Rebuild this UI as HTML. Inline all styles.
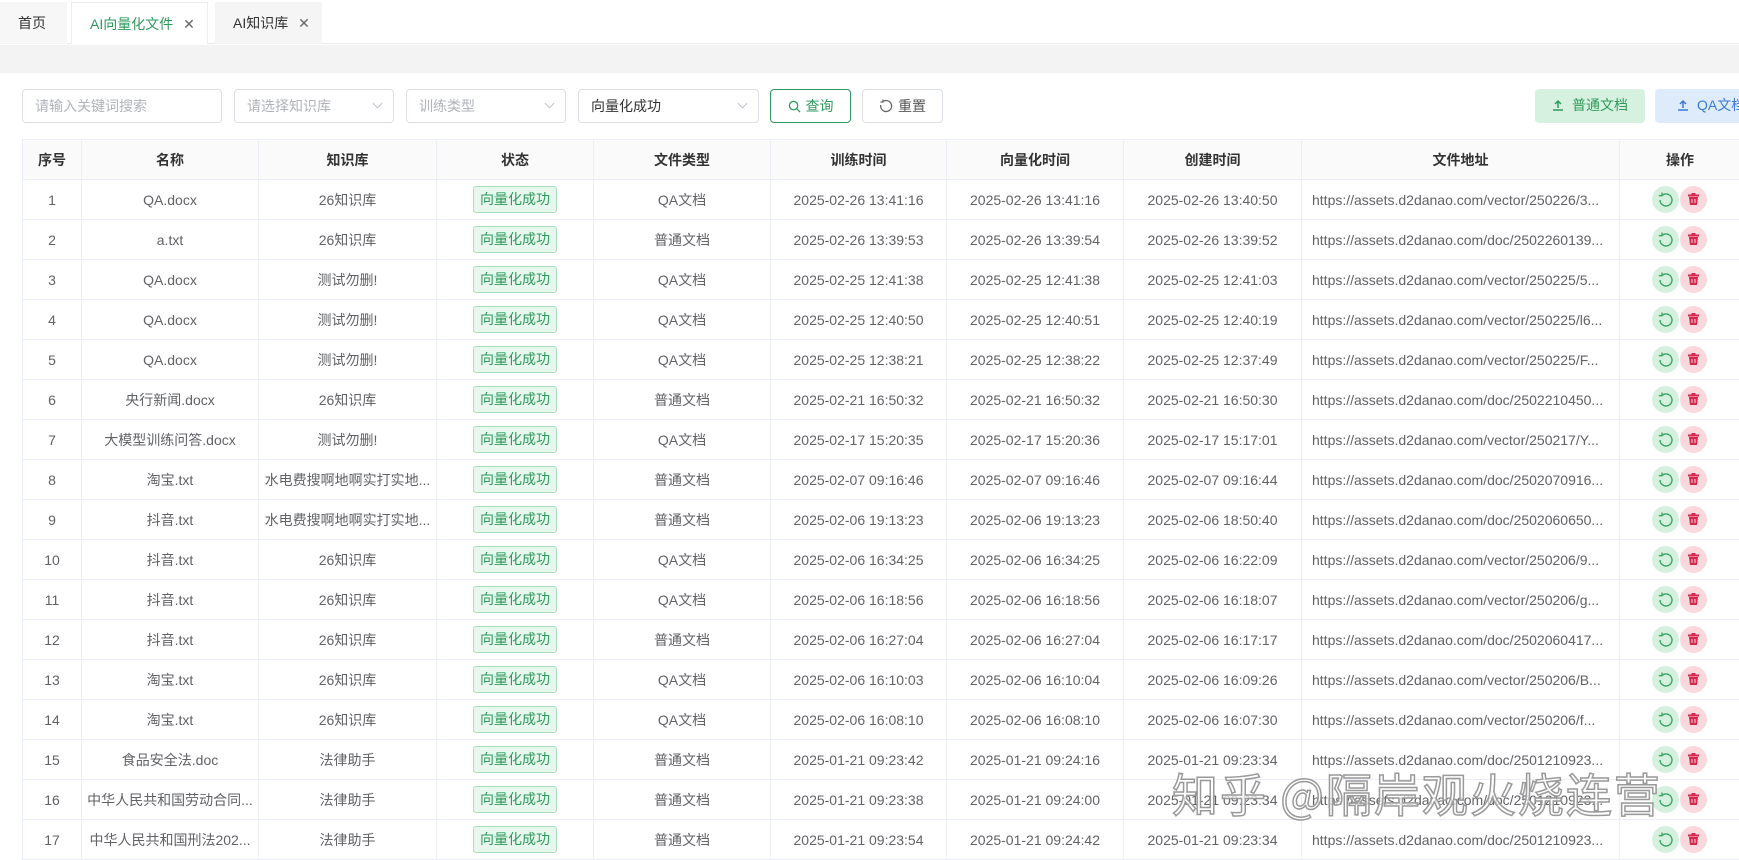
<!DOCTYPE html>
<html><head><meta charset="utf-8"><style>
*{box-sizing:border-box;margin:0;padding:0}
body{width:1739px;height:858px;overflow:hidden;background:#fff;font-family:"Liberation Sans","Noto Sans CJK SC",sans-serif;font-size:14px;color:#555;position:relative}
.tabs{position:absolute;left:0;top:0;width:1739px;height:44px;border-bottom:1px solid #e8e8e8;background:#fff}
.tab{position:absolute;top:2px;height:42px;background:#f5f5f5;line-height:42px;font-size:14px;color:#333;padding-left:18px}
.tab.active{background:#fff;color:#2e9a5c;border:1px solid #eee;border-bottom:none}
.band{position:absolute;left:0;top:45px;width:1739px;height:28px;background:#f3f3f3}
.card{position:absolute;left:0;top:73px;width:1739px;height:785px;background:#fff;border-radius:6px}
.in{position:absolute;top:89px;height:34px;border:1px solid #dcdfe6;border-radius:4px;line-height:32px;padding-left:12px;color:#b0b3b8;font-size:14px}
.in .ar{position:absolute;right:12px;top:10px;width:7px;height:7px;border-right:1px solid #c0c4cc;border-bottom:1px solid #c0c4cc;transform:rotate(45deg)}
.btn{position:absolute;top:89px;height:34px;border-radius:4px;line-height:32px;text-align:center;font-size:14px}
table{position:absolute;left:22px;top:139px;width:1737px;border-collapse:collapse;table-layout:fixed}
td,th{border:1px solid #ebeef5;height:40px;text-align:center;font-size:14px;color:#606266;white-space:nowrap;overflow:hidden;padding:0 4px}
th{background:#fafafa;color:#333;font-weight:bold}
td.u{text-align:left;padding-left:10px}
.tag{display:inline-block;width:84px;height:27px;line-height:25px;border:1px solid #a6dfb8;background:#e8f7ee;color:#2e9a5c;border-radius:3px;font-size:14px}
.c{position:absolute;top:7px;width:27px;height:27px;border-radius:50%}
.wm{position:absolute;left:1172px;top:760px;font-size:46px;color:rgba(255,255,255,.7);-webkit-text-stroke:1.5px #999;letter-spacing:2px;font-family:"Noto Sans CJK SC",sans-serif;white-space:nowrap}
</style></head><body>
<div class="tabs">
<div class="tab" style="left:0;width:67px;background:#f7f7f7">首页</div>
<div class="tab active" style="left:71px;width:137px">AI向量化文件 <span style="color:#666;margin-left:6px">✕</span></div>
<div class="tab" style="left:215px;width:107px">AI知识库 <span style="color:#666;margin-left:6px">✕</span></div>
</div>
<div class="band"></div>
<div class="card"></div>
<div class="in" style="left:22px;width:200px">请输入关键词搜索</div>
<div class="in" style="left:234px;width:160px">请选择知识库<span class="ar"></span></div>
<div class="in" style="left:406px;width:160px">训练类型<span class="ar"></span></div>
<div class="in" style="left:578px;width:181px;color:#333">向量化成功<span class="ar"></span></div>
<div class="btn" style="left:770px;width:81px;border:1px solid #2e9a5c;color:#2e9a5c">
<svg width="13" height="13" viewBox="0 0 14 14" style="vertical-align:-2px;margin-right:5px"><circle cx="6" cy="6" r="4.5" fill="none" stroke="#2e9a5c" stroke-width="1.4"/><path d="M9.5 9.5L13 13" stroke="#2e9a5c" stroke-width="1.4"/></svg>查询</div>
<div class="btn" style="left:862px;width:81px;border:1px solid #dcdfe6;color:#555">
<svg width="14" height="14" viewBox="0 0 14 14" style="vertical-align:-2px;margin-right:5px"><path d="M4 2.5A5.5 5.5 0 1 1 1.7 6" fill="none" stroke="#666" stroke-width="1.3"/><path d="M4 0.5V3H1.5" fill="none" stroke="#666" stroke-width="1.3"/></svg>重置</div>
<div class="btn" style="left:1535px;width:110px;background:#d6f1e0;color:#2e9a5c">
<svg width="12" height="12" viewBox="0 0 12 12" style="vertical-align:-1px;margin-right:8px"><path d="M6 9V2M3 5l3-3 3 3M1 11h10" fill="none" stroke="#2e9a5c" stroke-width="1.5"/></svg>普通文档</div>
<div class="btn" style="left:1655px;width:100px;background:#ddebfb;color:#3a7bd5;text-align:left;padding-left:22px">
<svg width="12" height="12" viewBox="0 0 12 12" style="vertical-align:-1px;margin-right:8px"><path d="M6 9V2M3 5l3-3 3 3M1 11h10" fill="none" stroke="#3a7bd5" stroke-width="1.5"/></svg>QA文档</div>
<table>
<colgroup><col style="width:59px"><col style="width:177px"><col style="width:178px"><col style="width:157px"><col style="width:177px"><col style="width:176px"><col style="width:177px"><col style="width:178px"><col style="width:318px"><col style="width:140px"></colgroup>
<tr><th>序号</th><th>名称</th><th>知识库</th><th>状态</th><th>文件类型</th><th>训练时间</th><th>向量化时间</th><th>创建时间</th><th>文件地址</th><th style="text-align:left;padding-left:46px">操作</th></tr>
<tr><td>1</td><td>QA.docx</td><td>26知识库</td><td><span class="tag">向量化成功</span></td><td>QA文档</td><td>2025-02-26 13:41:16</td><td>2025-02-26 13:41:16</td><td>2025-02-26 13:40:50</td><td class="u">https://assets.d2danao.com/vector/250226/3...</td><td></td></tr>
<tr><td>2</td><td>a.txt</td><td>26知识库</td><td><span class="tag">向量化成功</span></td><td>普通文档</td><td>2025-02-26 13:39:53</td><td>2025-02-26 13:39:54</td><td>2025-02-26 13:39:52</td><td class="u">https://assets.d2danao.com/doc/2502260139...</td><td></td></tr>
<tr><td>3</td><td>QA.docx</td><td>测试勿删!</td><td><span class="tag">向量化成功</span></td><td>QA文档</td><td>2025-02-25 12:41:38</td><td>2025-02-25 12:41:38</td><td>2025-02-25 12:41:03</td><td class="u">https://assets.d2danao.com/vector/250225/5...</td><td></td></tr>
<tr><td>4</td><td>QA.docx</td><td>测试勿删!</td><td><span class="tag">向量化成功</span></td><td>QA文档</td><td>2025-02-25 12:40:50</td><td>2025-02-25 12:40:51</td><td>2025-02-25 12:40:19</td><td class="u">https://assets.d2danao.com/vector/250225/l6...</td><td></td></tr>
<tr><td>5</td><td>QA.docx</td><td>测试勿删!</td><td><span class="tag">向量化成功</span></td><td>QA文档</td><td>2025-02-25 12:38:21</td><td>2025-02-25 12:38:22</td><td>2025-02-25 12:37:49</td><td class="u">https://assets.d2danao.com/vector/250225/F...</td><td></td></tr>
<tr><td>6</td><td>央行新闻.docx</td><td>26知识库</td><td><span class="tag">向量化成功</span></td><td>普通文档</td><td>2025-02-21 16:50:32</td><td>2025-02-21 16:50:32</td><td>2025-02-21 16:50:30</td><td class="u">https://assets.d2danao.com/doc/2502210450...</td><td></td></tr>
<tr><td>7</td><td>大模型训练问答.docx</td><td>测试勿删!</td><td><span class="tag">向量化成功</span></td><td>QA文档</td><td>2025-02-17 15:20:35</td><td>2025-02-17 15:20:36</td><td>2025-02-17 15:17:01</td><td class="u">https://assets.d2danao.com/vector/250217/Y...</td><td></td></tr>
<tr><td>8</td><td>淘宝.txt</td><td>水电费搜啊地啊实打实地...</td><td><span class="tag">向量化成功</span></td><td>普通文档</td><td>2025-02-07 09:16:46</td><td>2025-02-07 09:16:46</td><td>2025-02-07 09:16:44</td><td class="u">https://assets.d2danao.com/doc/2502070916...</td><td></td></tr>
<tr><td>9</td><td>抖音.txt</td><td>水电费搜啊地啊实打实地...</td><td><span class="tag">向量化成功</span></td><td>普通文档</td><td>2025-02-06 19:13:23</td><td>2025-02-06 19:13:23</td><td>2025-02-06 18:50:40</td><td class="u">https://assets.d2danao.com/doc/2502060650...</td><td></td></tr>
<tr><td>10</td><td>抖音.txt</td><td>26知识库</td><td><span class="tag">向量化成功</span></td><td>QA文档</td><td>2025-02-06 16:34:25</td><td>2025-02-06 16:34:25</td><td>2025-02-06 16:22:09</td><td class="u">https://assets.d2danao.com/vector/250206/9...</td><td></td></tr>
<tr><td>11</td><td>抖音.txt</td><td>26知识库</td><td><span class="tag">向量化成功</span></td><td>QA文档</td><td>2025-02-06 16:18:56</td><td>2025-02-06 16:18:56</td><td>2025-02-06 16:18:07</td><td class="u">https://assets.d2danao.com/vector/250206/g...</td><td></td></tr>
<tr><td>12</td><td>抖音.txt</td><td>26知识库</td><td><span class="tag">向量化成功</span></td><td>普通文档</td><td>2025-02-06 16:27:04</td><td>2025-02-06 16:27:04</td><td>2025-02-06 16:17:17</td><td class="u">https://assets.d2danao.com/doc/2502060417...</td><td></td></tr>
<tr><td>13</td><td>淘宝.txt</td><td>26知识库</td><td><span class="tag">向量化成功</span></td><td>QA文档</td><td>2025-02-06 16:10:03</td><td>2025-02-06 16:10:04</td><td>2025-02-06 16:09:26</td><td class="u">https://assets.d2danao.com/vector/250206/B...</td><td></td></tr>
<tr><td>14</td><td>淘宝.txt</td><td>26知识库</td><td><span class="tag">向量化成功</span></td><td>QA文档</td><td>2025-02-06 16:08:10</td><td>2025-02-06 16:08:10</td><td>2025-02-06 16:07:30</td><td class="u">https://assets.d2danao.com/vector/250206/f...</td><td></td></tr>
<tr><td>15</td><td>食品安全法.doc</td><td>法律助手</td><td><span class="tag">向量化成功</span></td><td>普通文档</td><td>2025-01-21 09:23:42</td><td>2025-01-21 09:24:16</td><td>2025-01-21 09:23:34</td><td class="u">https://assets.d2danao.com/doc/2501210923...</td><td></td></tr>
<tr><td>16</td><td>中华人民共和国劳动合同...</td><td>法律助手</td><td><span class="tag">向量化成功</span></td><td>普通文档</td><td>2025-01-21 09:23:38</td><td>2025-01-21 09:24:00</td><td>2025-01-21 09:23:34</td><td class="u">https://assets.d2danao.com/doc/2501210923...</td><td></td></tr>
<tr><td>17</td><td>中华人民共和国刑法202...</td><td>法律助手</td><td><span class="tag">向量化成功</span></td><td>普通文档</td><td>2025-01-21 09:23:54</td><td>2025-01-21 09:24:42</td><td>2025-01-21 09:23:34</td><td class="u">https://assets.d2danao.com/doc/2501210923...</td><td></td></tr>
</table>
<div id="ops"></div>
<div class="wm">知乎 @隔岸观火烧连营</div>
<script>
var h='';for(var i=0;i<17;i++){var y=179+i*40+7;
h+='<div class="c" style="left:1652px;top:'+y+'px;background:#d5f0de"><svg width="27" height="27" viewBox="0 0 27 27"><path d="M10 9.5A6 6 0 1 1 8 14" fill="none" stroke="#3aa864" stroke-width="1.4"/><path d="M10 6.5V9.7H6.8" fill="none" stroke="#3aa864" stroke-width="1.4"/></svg></div>';
h+='<div class="c" style="left:1680px;top:'+y+'px;background:#f9d9de"><svg width="27" height="27" viewBox="0 0 27 27"><rect x="8" y="8.5" width="11" height="2" fill="#d3284a"/><rect x="11.5" y="7" width="4" height="2" fill="#d3284a"/><path d="M9 11h9l-1 8h-7z" fill="#d3284a"/><path d="M12 13v4M15 13v4" stroke="#f9d9de" stroke-width="1"/></svg></div>';}
document.getElementById('ops').innerHTML=h;
</script>
</body></html>
